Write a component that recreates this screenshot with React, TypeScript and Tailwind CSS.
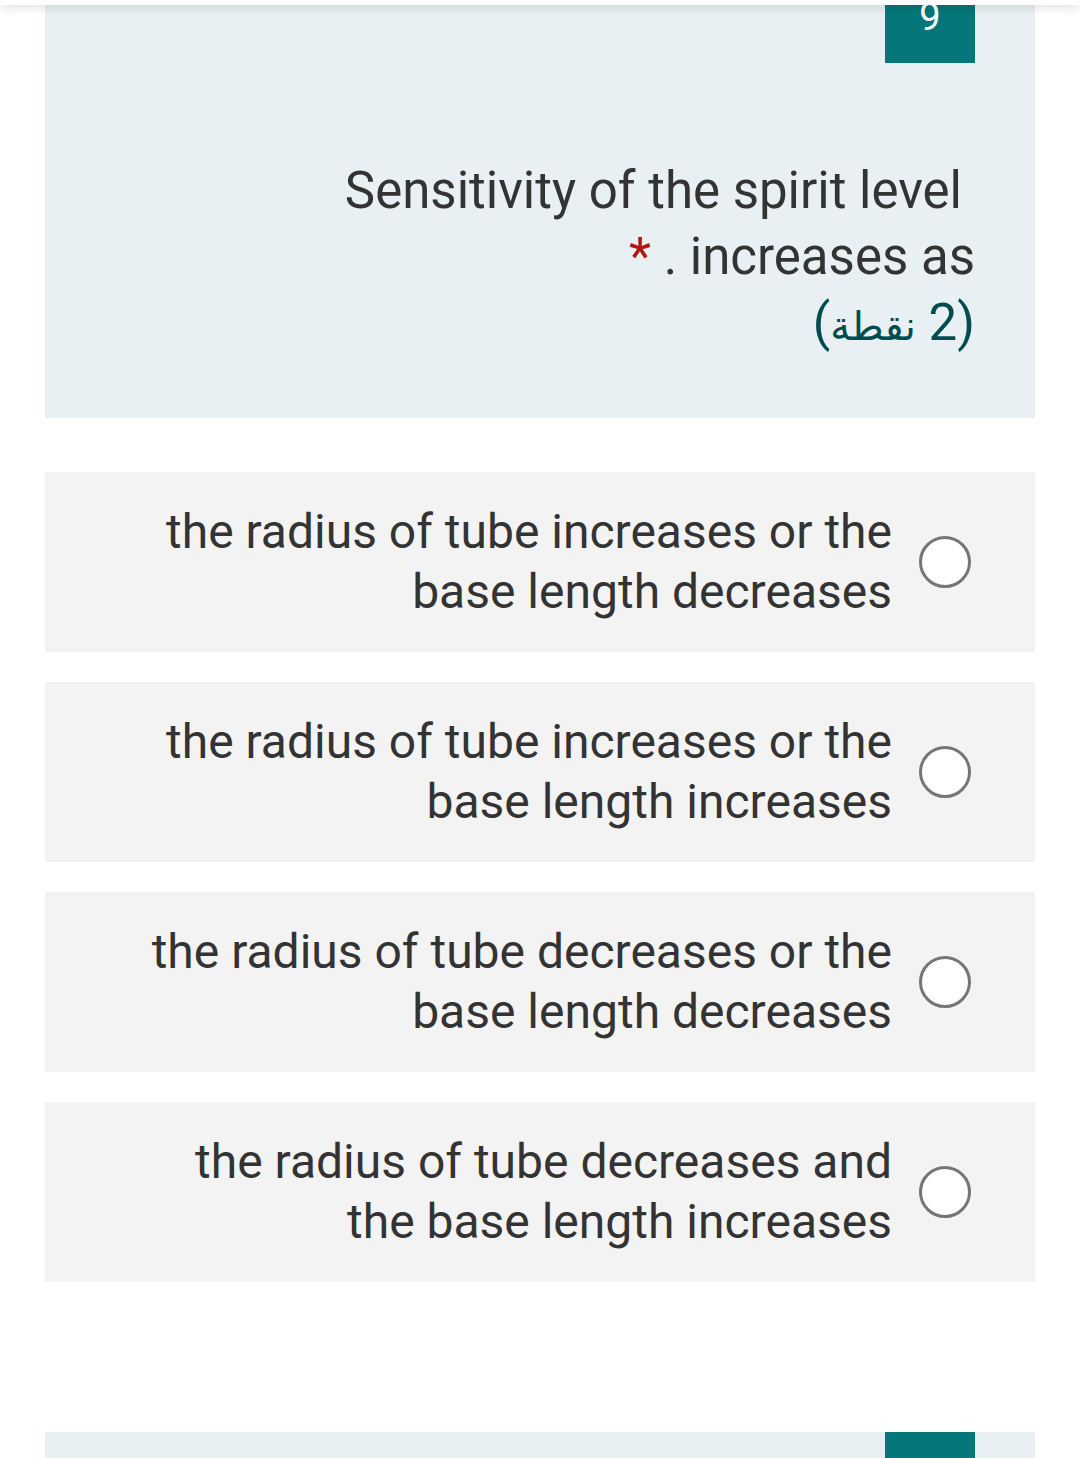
import { Fragment } from "react";

const options = [
  "the radius of tube increases or the base length decreases",
  "the radius of tube increases or the base length increases",
  "the radius of tube decreases or the base length decreases",
  "the radius of tube decreases and the base length increases",
];

function Radio() {
  return (
    <span className="block h-[52px] w-[52px] shrink-0 rounded-full border-[3px] border-[#757575] bg-white" />
  );
}

export default function App() {
  return (
    <div
      dir="rtl"
      className="relative h-[1458px] w-full overflow-hidden bg-white text-[#333333]"
      style={{ fontFamily: "Roboto, 'DejaVu Sans', sans-serif" }}
    >
      {/* app bar edge peeking over the scrolled list */}
      <div className="absolute inset-x-0 top-0 z-10 h-[5px] bg-white shadow-[0_2px_10px_rgba(0,0,0,0.18)]" />

      <div className="flex flex-col px-[45px]">
        {/* question card */}
        <section className="relative -mt-[30px] bg-[#e8f0f3] pb-[62px] pl-[62px] pr-[60px] pt-[188px]">
          <div className="absolute right-[60px] top-0 flex h-[93px] w-[90px] items-center justify-center bg-[#05777a] text-[38px] leading-none text-white">
            9
          </div>
          <h2 className="text-[51px] font-normal leading-[66px]">
            <span className="block pr-[13px]">Sensitivity of the spirit level</span>
            increases as . <span className="text-[#b3160f]">*</span>
          </h2>
          <p className="h-[66px] text-[51px] leading-[66px] text-[#004d4f]">
            (2 <span className="text-[40px]">نقطة</span>)
          </p>
        </section>

        <div className="mt-[54px] flex flex-col gap-[30px]">
          {options.map((opt) => (
            <Fragment key={opt}>
              <label className="flex h-[180px] items-center gap-[27px] bg-[#f3f3f3] pl-[85px] pr-[64px]">
                <Radio />
                <span className="flex-1 text-[48px] leading-[60px]">{opt}</span>
              </label>
            </Fragment>
          ))}
        </div>

        {/* next question card */}
        <section className="relative mt-[150px] h-[60px] bg-[#e8f0f3]">
          <div className="absolute right-[60px] top-0 h-full w-[90px] bg-[#05777a]" />
        </section>
      </div>
    </div>
  );
}
